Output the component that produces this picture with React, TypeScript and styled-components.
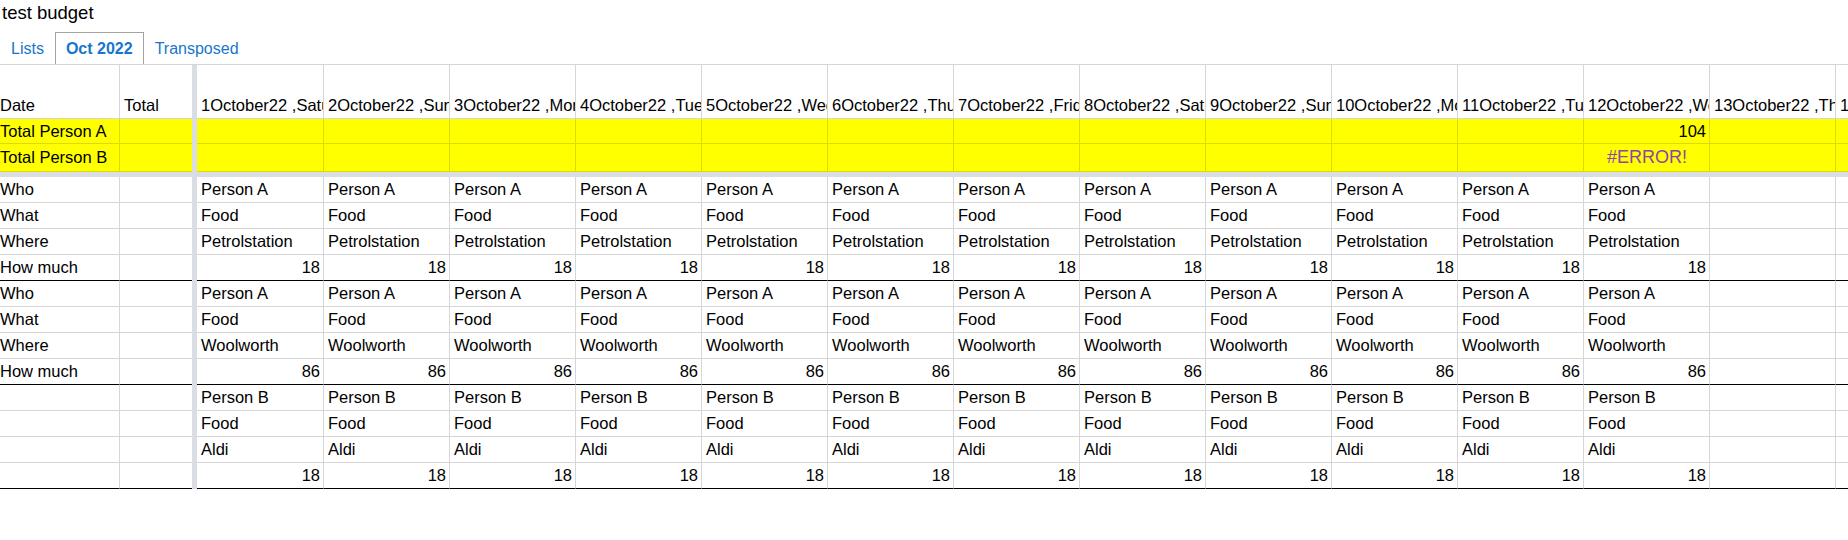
import React from "react";
import styled, { createGlobalStyle } from "styled-components";

const GlobalStyle = createGlobalStyle`
  html, body {
    margin: 0;
    padding: 0;
    background: #ffffff;
    overflow: hidden;
  }
  body {
    font-family: "Liberation Sans", Arial, sans-serif;
    font-size: 16px;
    color: #000000;
  }
`;

const GRID = "#d6d6d6";
const YELLOW_LINE = "#dcdc00";
const SEP = "#dadde3";

const Page = styled.div`
  width: 1848px;
  height: 540px;
  overflow: hidden;
`;

const Title = styled.div`
  box-sizing: border-box;
  height: 32px;
  padding: 1px 0 0 2px;
  font-size: 18.5px;
  line-height: 24px;
`;

const TabBar = styled.div`
  display: flex;
  height: 32px;
`;

const Tab = styled.div<{ $active?: boolean }>`
  box-sizing: border-box;
  display: flex;
  align-items: center;
  height: 32px;
  padding: 1px 10px 0;
  border: 1px solid ${(p) => (p.$active ? "#a3a3a3" : "transparent")};
  border-bottom: none;
  color: #1776cc;
  font-size: 16px;
  font-weight: ${(p) => (p.$active ? 700 : 400)};
  background: #ffffff;
`;

const Sheet = styled.div`
  width: 100%;
  overflow: hidden;
  border-top: 1px solid ${GRID};
  font-size: 16.5px;
`;

type Tone = "plain" | "yellow";
type Rule = "grid" | "black" | "yellow";

const Row = styled.div<{ $h: number }>`
  display: flex;
  height: ${(p) => p.$h}px;
  width: max-content;
`;

const Cell = styled.div<{
  $w: number;
  $tone: Tone;
  $rule: Rule;
  $align?: "left" | "right" | "center";
  $head?: boolean;
  $noRight?: boolean;
  $flush?: boolean;
  $error?: boolean;
}>`
  box-sizing: border-box;
  flex: 0 0 ${(p) => p.$w}px;
  width: ${(p) => p.$w}px;
  height: 100%;
  display: flex;
  align-items: ${(p) => (p.$head ? "flex-end" : "center")};
  justify-content: ${(p) =>
    p.$align === "right" ? "flex-end" : p.$align === "center" ? "center" : "flex-start"};
  padding: 0 3px ${(p) => (p.$head ? "3px" : "0")} ${(p) => (p.$flush ? "0" : "4px")};
  overflow: hidden;
  white-space: nowrap;
  line-height: 19px;
  font-size: ${(p) => (p.$error ? "18px" : "inherit")};
  background: ${(p) => (p.$tone === "yellow" ? "#ffff00" : "#ffffff")};
  color: ${(p) => (p.$error ? "#8e44ad" : "#000000")};
  border-right: ${(p) =>
    p.$noRight ? "none" : `1px solid ${p.$tone === "yellow" ? YELLOW_LINE : GRID}`};
  border-bottom: 1px solid
    ${(p) => (p.$rule === "black" ? "#000000" : p.$rule === "yellow" ? YELLOW_LINE : GRID)};
`;

const Separator = styled.div`
  flex: 0 0 5px;
  width: 5px;
  height: 100%;
  background: ${SEP};
`;

const Band = styled.div`
  height: 5px;
  width: 100%;
  background: ${SEP};
`;

const WEEKDAYS = ["Saturday", "Sunday", "Monday", "Tuesday", "Wednesday", "Thursday", "Friday"];
const DAY_COUNT = 14;
const FILLED = 12;

const days = Array.from({ length: DAY_COUNT }, (_, i) => `${i + 1}October22 ,${WEEKDAYS[i % 7]}`);

const dayWidth = (i: number) => (i === 0 ? 127 : 126);

type DayValue = { text: string; align?: "left" | "right" | "center"; error?: boolean } | null;

type RowSpec = {
  label: string;
  h: number;
  tone: Tone;
  rule: Rule;
  values: DayValue[];
};

const fill = (v: DayValue): DayValue[] =>
  Array.from({ length: DAY_COUNT }, (_, i) => (i < FILLED ? v : null));

const groups: { labels: string[]; values: string[] }[] = [
  { labels: ["Who", "What", "Where", "How much"], values: ["Person A", "Food", "Petrolstation", "18"] },
  { labels: ["Who", "What", "Where", "How much"], values: ["Person A", "Food", "Woolworth", "86"] },
  { labels: ["", "", "", ""], values: ["Person B", "Food", "Aldi", "18"] },
];

const yellowRows: RowSpec[] = [
  {
    label: "Total Person A",
    h: 25,
    tone: "yellow",
    rule: "yellow",
    values: Array.from({ length: DAY_COUNT }, (_, i) =>
      i === FILLED - 1 ? { text: "104", align: "right" } : null
    ),
  },
  {
    label: "Total Person B",
    h: 28,
    tone: "yellow",
    rule: "yellow",
    values: Array.from({ length: DAY_COUNT }, (_, i) =>
      i === FILLED - 1 ? { text: "#ERROR!", align: "center", error: true } : null
    ),
  },
];

const bodyRows: RowSpec[] = groups.flatMap((g) =>
  g.labels.map((label, r) => ({
    label,
    h: 26,
    tone: "plain" as Tone,
    rule: (r === 3 ? "black" : "grid") as Rule,
    values: fill({ text: g.values[r], align: r === 3 ? "right" : "left" }),
  }))
);

function DataRow({ spec }: { spec: RowSpec }) {
  return (
    <Row $h={spec.h}>
      <Cell $w={120} $tone={spec.tone} $rule={spec.rule} $flush>
        {spec.label}
      </Cell>
      <Cell $w={72} $tone={spec.tone} $rule={spec.rule} $noRight />
      <Separator />
      {spec.values.map((v, i) => (
        <Cell
          key={i}
          $w={dayWidth(i)}
          $tone={spec.tone}
          $rule={spec.rule}
          $align={v?.align}
          $error={v?.error}
        >
          {v?.text ?? ""}
        </Cell>
      ))}
    </Row>
  );
}

export default function App() {
  return (
    <Page>
      <GlobalStyle />
      <Title>test budget</Title>
      <TabBar>
        <Tab>Lists</Tab>
        <Tab $active>Oct 2022</Tab>
        <Tab>Transposed</Tab>
      </TabBar>
      <Sheet>
        <Row $h={54}>
          <Cell $w={120} $tone="plain" $rule="grid" $head $flush>
            Date
          </Cell>
          <Cell $w={72} $tone="plain" $rule="grid" $head $noRight>
            Total
          </Cell>
          <Separator />
          {days.map((d, i) => (
            <Cell key={d} $w={dayWidth(i)} $tone="plain" $rule="grid" $head>
              {d}
            </Cell>
          ))}
        </Row>
        {yellowRows.map((r) => (
          <DataRow key={r.label} spec={r} />
        ))}
        <Band />
        {bodyRows.map((r, i) => (
          <DataRow key={i} spec={r} />
        ))}
      </Sheet>
    </Page>
  );
}
